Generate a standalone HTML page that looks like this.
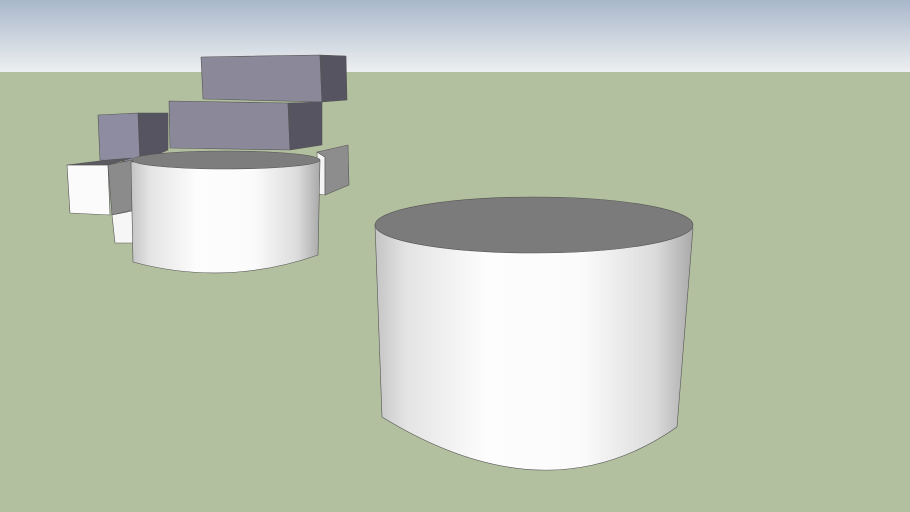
<!DOCTYPE html>
<html><head><style>html,body{margin:0;padding:0;overflow:hidden}svg{display:block}</style></head>
<body>
<svg width="910" height="512" viewBox="0 0 910 512" xmlns="http://www.w3.org/2000/svg">
<defs>
<linearGradient id="sky" x1="0" y1="0" x2="0" y2="1">
<stop offset="0" stop-color="#a9b7cb"/><stop offset="1" stop-color="#eef0f1"/>
</linearGradient>
<linearGradient id="cyl" x1="0" y1="0" x2="1" y2="0">
<stop offset="0" stop-color="#c4c4c4"/><stop offset="0.1" stop-color="#e4e4e4"/>
<stop offset="0.35" stop-color="#fdfdfd"/><stop offset="0.65" stop-color="#fbfbfb"/>
<stop offset="0.88" stop-color="#dcdcdc"/><stop offset="1" stop-color="#a9a9a9"/>
</linearGradient>
</defs>
<rect width="910" height="73" fill="url(#sky)"/>
<rect y="72" width="910" height="440" fill="#b3c09f"/>
<g stroke="#555" stroke-width="0.6" stroke-linejoin="round">
<polygon points="201,57 320,55 322,102 203,99" fill="#8a8899"/>
<polygon points="320,55 346,56 347,100 322,102" fill="#555460"/>
<polygon points="169,101 288,103 290,150 170,148" fill="#8a8899"/>
<polygon points="288,103 322,102 322,145 290,150" fill="#555460"/>
<polygon points="98,115 138,113 140,162 100,160" fill="#8e8ca0"/>
<polygon points="138,113 168,113 168,150 140,162" fill="#555460"/>
<polygon points="67,165 108,165 110,215 70,213" fill="#fbfbfb"/>
<polygon points="67,165 107,160 132,158 108,165" fill="#5a5a60"/>
<polygon points="108,165 132,160 132,210 112,215" fill="#8b8b8b"/>
<polygon points="112,215 137,210 138,243 115,243" fill="#f6f6f6"/>
<polygon points="317,152 325,157 325,195 318,194" fill="#f5f5f5"/>
<polygon points="317,152 348,145 349,185 325,195 325,157" fill="#8d8d8d"/>
<path d="M131,162 L133,262 Q226,287 318,255 L320,160 Z" fill="url(#cyl)"/>
<ellipse cx="226" cy="160" rx="94" ry="9" fill="#7d7d7d"/>
<path d="M375,224 L382,417 Q547,518 677,427 L693,228 Z" fill="url(#cyl)"/>
<ellipse cx="534" cy="225" rx="159" ry="28" fill="#7b7b7b"/>
</g>
</svg>
</body></html>
